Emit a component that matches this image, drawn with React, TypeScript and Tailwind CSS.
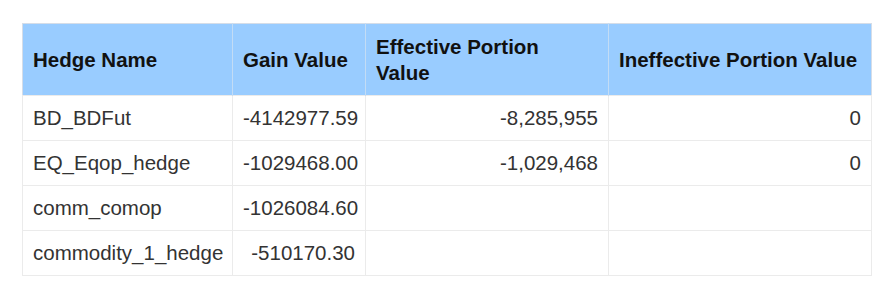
import React from 'react';

interface Row {
  name: string;
  gain: string;
  effective: string;
  ineffective: string;
}

const rows: Row[] = [
  { name: 'BD_BDFut', gain: '-4142977.59', effective: '-8,285,955', ineffective: '0' },
  { name: 'EQ_Eqop_hedge', gain: '-1029468.00', effective: '-1,029,468', ineffective: '0' },
  { name: 'comm_comop', gain: '-1026084.60', effective: '', ineffective: '' },
  { name: 'commodity_1_hedge', gain: '-510170.30', effective: '', ineffective: '' },
];

const App: React.FC = () => {
  return (
    <div className="w-[891px] h-[284px] bg-white pt-[23px] pl-[22px] font-['Liberation_Sans',Arial,sans-serif]">
      <table className="w-[849px] table-fixed border-collapse border border-[#d5dde8] text-[20.5px] leading-[26px]">
        <colgroup>
          <col className="w-[210px]" />
          <col className="w-[133px]" />
          <col className="w-[243px]" />
          <col className="w-[263px]" />
        </colgroup>
        <thead>
          <tr className="h-[72px] bg-[#99ccff] text-[#111] font-bold">
            <th className="px-[10px] text-left align-middle border-r border-[#c3dcf5]">Hedge Name</th>
            <th className="px-[10px] text-left align-middle border-r border-[#c3dcf5]">Gain Value</th>
            <th className="px-[10px] text-left align-middle border-r border-[#c3dcf5]">Effective Portion Value</th>
            <th className="px-[10px] text-left align-middle whitespace-nowrap">Ineffective Portion Value</th>
          </tr>
        </thead>
        <tbody className="text-[#333]">
          {rows.map((r) => (
            <tr key={r.name} className="h-[45px]">
              <td className="px-[10px] border border-[#ebebeb] whitespace-nowrap">{r.name}</td>
              <td className="px-[10px] border border-[#ebebeb] text-right">{r.gain}</td>
              <td className="px-[10px] border border-[#ebebeb] text-right">{r.effective}</td>
              <td className="px-[10px] border border-[#ebebeb] text-right">{r.ineffective}</td>
            </tr>
          ))}
        </tbody>
      </table>
    </div>
  );
};

export default App;
